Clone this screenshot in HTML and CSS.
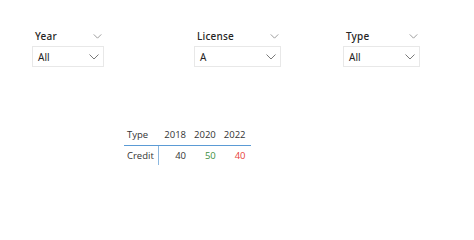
FILE: index.html
```html
<!DOCTYPE html>
<html lang="en">
<head>
  <meta charset="UTF-8" />
  <title>Report</title>
  <link rel="stylesheet" href="styles.css">
</head>
<body>
  <div class="slicers">
    <div class="slicer year">
      <div class="slicer-head">
        <span class="slicer-title">Year</span>
        <svg class="chev small" viewBox="0 0 10 6"><path d="M0.5 0.5 L5 5 L9.5 0.5" /></svg>
      </div>
      <div class="slicer-box">
        <span>All</span>
        <svg class="chev" viewBox="0 0 10 6"><path d="M0.5 0.5 L5 5 L9.5 0.5" /></svg>
      </div>
    </div>

    <div class="slicer license">
      <div class="slicer-head">
        <span class="slicer-title">License</span>
        <svg class="chev small" viewBox="0 0 10 6"><path d="M0.5 0.5 L5 5 L9.5 0.5" /></svg>
      </div>
      <div class="slicer-box">
        <span>A</span>
        <svg class="chev" viewBox="0 0 10 6"><path d="M0.5 0.5 L5 5 L9.5 0.5" /></svg>
      </div>
    </div>

    <div class="slicer type">
      <div class="slicer-head">
        <span class="slicer-title">Type</span>
        <svg class="chev small" viewBox="0 0 10 6"><path d="M0.5 0.5 L5 5 L9.5 0.5" /></svg>
      </div>
      <div class="slicer-box">
        <span>All</span>
        <svg class="chev" viewBox="0 0 10 6"><path d="M0.5 0.5 L5 5 L9.5 0.5" /></svg>
      </div>
    </div>
  </div>

  <table class="matrix">
    <thead>
      <tr>
        <th class="rowhead">Type</th>
        <th>2018</th>
        <th>2020</th>
        <th class="last">2022</th>
      </tr>
    </thead>
    <tbody>
      <tr>
        <td class="rowhead">Credit</td>
        <td>40</td>
        <td class="up">50</td>
        <td class="down last">40</td>
      </tr>
    </tbody>
  </table>
</body>
</html>
```

FILE: styles.css
```css
body {
  margin: 0;
  background: #fff;
  font-family: "Noto Sans", "Open Sans", sans-serif;
  color: #252423;
}

.slicers {
  display: flex;
  padding: 28px 0 0 32px;
}
.slicer.year { width: 72px; }
.slicer.license { width: 87px; margin-left: 90px; }
.slicer.type { width: 77px; margin-left: 62px; }

.slicer-head {
  display: flex;
  align-items: center;
  justify-content: space-between;
  height: 16px;
  padding: 0 2px 0 3px;
}
.slicer-title {
  font-size: 10px;
  font-weight: 500;
  letter-spacing: 0.2px;
}

.chev {
  width: 10px;
  height: 6px;
  fill: none;
  stroke: #7a7a7a;
  stroke-width: 1;
}
.chev.small {
  width: 9px;
  height: 5px;
  stroke: #8a8a8a;
}

.slicer-box {
  display: flex;
  align-items: center;
  justify-content: space-between;
  height: 18px;
  margin-top: 2px;
  padding: 1px 4px 0 5px;
  border: 1px solid #e8e8e8;
  font-size: 10px;
}

.matrix {
  border-collapse: collapse;
  margin: 58px 0 0 124px;
  font-family: "Open Sans", sans-serif;
  font-size: 9.5px;
  color: #333;
}
.matrix th {
  font-weight: normal;
  text-align: right;
  padding: 3px 2px 4px 6px;
  border-bottom: 1px solid #5b9bd5;
}
.matrix td {
  text-align: right;
  padding: 3px 2px 3px 6px;
}
.matrix .last {
  padding-right: 5px;
}
.matrix .rowhead {
  text-align: left;
  padding-left: 3px;
  padding-right: 4px;
}
.matrix td.rowhead {
  border-right: 1px solid #8cb8e0;
}
.matrix .up { color: #3f8f3f; }
.matrix .down { color: #e8413a; }
```
